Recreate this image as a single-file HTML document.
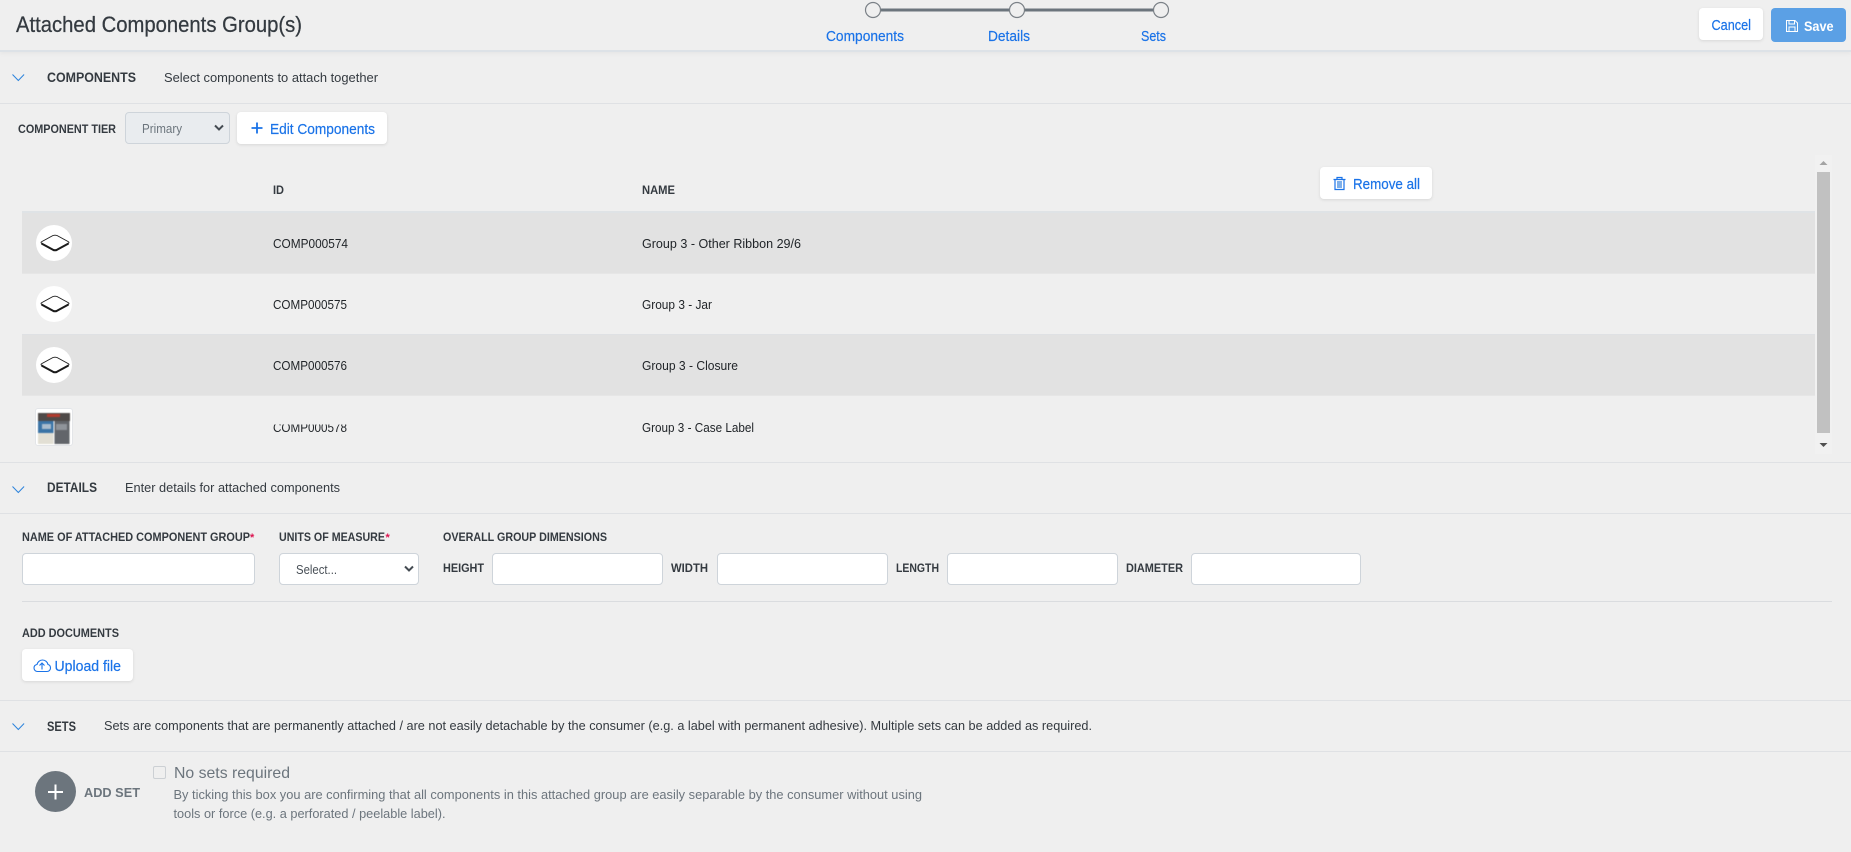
<!DOCTYPE html>
<html lang="en">
<head>
<meta charset="utf-8">
<title>Attached Components Group(s)</title>
<style>
html,body{margin:0;padding:0;width:1851px;height:852px;overflow:hidden;background:#efefef;font-family:"Liberation Sans",sans-serif}
.b{position:absolute;box-sizing:border-box}
.btn{background:#fff;border-radius:4px;box-shadow:0 1px 3px rgba(0,0,0,.1)}
.inp{background:#fff;border:1px solid #ced4da;border-radius:4px}
.ln{position:absolute;height:1px;left:0;width:1851px;background:#dfe1e4}
.row{position:absolute;box-sizing:border-box;left:22px;width:1793px;background:#e2e2e2}
svg.o{position:absolute;left:0;top:0}
text{font-family:"Liberation Sans",sans-serif}
.d{fill:#212529;font-size:13px}
.h{fill:#343a40;font-size:13.5px;font-weight:700}
.l{fill:#343a40;font-size:11.5px;font-weight:700}
.a{fill:#1a73e8;font-size:15px;stroke:#1a73e8;stroke-width:.2px}
.g{fill:#6c757d;font-size:13px}
</style>
</head>
<body>
<header class="b" style="left:0;top:0;width:1851px;height:52px;background:#efefef;border-bottom:2px solid #dde2e7;box-shadow:0 2px 4px rgba(0,0,0,.04)"></header>
<div class="b btn" style="left:1699px;top:8px;width:64px;height:32px"></div>
<div class="b" style="left:1771px;top:8px;width:75px;height:34px;background:#5ba0e5;border-radius:4px"></div>

<div class="ln" style="top:103px"></div>
<div class="b" style="left:124.5px;top:112px;width:105px;height:32px;background:#e9ecef;border:1px solid #ced4da;border-radius:4px"></div>
<div class="b btn" style="left:237px;top:112px;width:150px;height:32px"></div>

<div class="b" style="left:1815px;top:155px;width:17px;height:299px;background:#f1f1f1"></div>
<div class="b" style="left:1817px;top:172px;width:13px;height:261px;background:#c1c1c1"></div>
<div class="row" style="top:211px;height:63px;border-top:2px solid #dfe3e6;border-bottom:1px solid #e6e6e6"></div>
<div class="row" style="top:334px;height:62px;border-top:1px solid #dfe1e4;border-bottom:1px solid #e6e6e6"></div>
<div class="b btn" style="left:1320px;top:167px;width:112px;height:32px"></div>

<div class="b" style="left:36px;top:225px;width:36px;height:36px;border-radius:50%;background:#fff"></div>
<div class="b" style="left:36px;top:286px;width:36px;height:36px;border-radius:50%;background:#fff"></div>
<div class="b" style="left:36px;top:347px;width:36px;height:36px;border-radius:50%;background:#fff"></div>
<div class="b" style="left:35px;top:408px;width:38px;height:38px;border-radius:3px;background:#fff;border:1px solid #e3e5e8"></div>

<div class="ln" style="top:462px"></div>
<div class="ln" style="top:513px"></div>
<div class="b inp" style="left:22px;top:553px;width:233px;height:32px"></div>
<div class="b inp" style="left:279px;top:553px;width:140px;height:32px"></div>
<div class="b inp" style="left:492px;top:553px;width:171px;height:32px"></div>
<div class="b inp" style="left:717px;top:553px;width:171px;height:32px"></div>
<div class="b inp" style="left:947px;top:553px;width:171px;height:32px"></div>
<div class="b inp" style="left:1191px;top:553px;width:170px;height:32px"></div>
<div class="b" style="left:22px;top:601px;width:1810px;height:1px;background:#dadcdf"></div>
<div class="b btn" style="left:22px;top:649px;width:111px;height:32px"></div>
<div class="ln" style="top:700px"></div>
<div class="ln" style="top:751px"></div>
<div class="b" style="left:35px;top:771px;width:41px;height:41px;border-radius:50%;background:#6c757d"></div>
<div class="b" style="left:153px;top:766px;width:13px;height:13px;border-radius:2px;background:#efefef;border:1px solid #ccd0d4"></div>

<svg class="o" width="1851" height="852" viewBox="0 0 1851 852" xmlns="http://www.w3.org/2000/svg">
  <!-- stepper -->
  <line x1="873" y1="10" x2="1161" y2="10" stroke="#6c757d" stroke-width="3"/>
  <circle cx="873" cy="10" r="7.5" fill="#efefef" stroke="#7b8187" stroke-width="1.2"/>
  <circle cx="1017" cy="10" r="7.5" fill="#efefef" stroke="#7b8187" stroke-width="1.2"/>
  <circle cx="1161" cy="10" r="7.5" fill="#efefef" stroke="#7b8187" stroke-width="1.2"/>
  <text class="a" x="826" y="41" textLength="78" lengthAdjust="spacingAndGlyphs">Components</text>
  <text class="a" x="988" y="41" textLength="42" lengthAdjust="spacingAndGlyphs">Details</text>
  <text class="a" x="1141" y="41" textLength="25" lengthAdjust="spacingAndGlyphs">Sets</text>

  <!-- header -->
  <text x="16" y="32" font-size="22" fill="#343a40" stroke="#343a40" stroke-width=".25" textLength="286" lengthAdjust="spacingAndGlyphs">Attached Components Group(s)</text>
  <text class="a" x="1711.5" y="30" style="font-size:14.5px" textLength="39.5" lengthAdjust="spacingAndGlyphs">Cancel</text>
  <text x="1804" y="31" font-size="14" font-weight="700" fill="#fff" textLength="29.5" lengthAdjust="spacingAndGlyphs">Save</text>
  <path d="M1786.5 20.5h8.5l2.5 2.5v8.5h-11z M1789 20.5v3.5h5.5v-3.5 M1789 31.5v-4.5h6v4.5" fill="none" stroke="#fff" stroke-width="1"/>

  <!-- section chevrons -->
  <path d="M12.5 74.5l5.8 6 5.8-6" fill="none" stroke="#2c83dc" stroke-width="1"/>
  <path d="M12.5 486.5l5.8 6 5.8-6" fill="none" stroke="#2c83dc" stroke-width="1"/>
  <path d="M12.5 723.5l5.8 6 5.8-6" fill="none" stroke="#2c83dc" stroke-width="1"/>

  <!-- components -->
  <text class="h" x="47" y="82" textLength="89" lengthAdjust="spacingAndGlyphs">COMPONENTS</text>
  <text class="d" x="164" y="82" style="fill:#343a40" textLength="214" lengthAdjust="spacingAndGlyphs">Select components to attach together</text>
  <text class="l" x="18" y="133" textLength="98" lengthAdjust="spacingAndGlyphs">COMPONENT TIER</text>
  <text class="g" x="142" y="133" textLength="40" lengthAdjust="spacingAndGlyphs">Primary</text>
  <path d="M215 125.5l4 4 4-4" fill="none" stroke="#444b52" stroke-width="2"/>
  <path d="M257 122.5v11 M251.5 128h11" stroke="#1a73e8" stroke-width="1.8" fill="none"/>
  <text class="a" x="270" y="134" textLength="105" lengthAdjust="spacingAndGlyphs">Edit Components</text>

  <!-- table -->
  <text class="l" x="273" y="194" textLength="11" lengthAdjust="spacingAndGlyphs">ID</text>
  <text class="l" x="642" y="194" textLength="33" lengthAdjust="spacingAndGlyphs">NAME</text>
  <path d="M1333.5 179.5h12 M1337 179v-1.5h5v1.5 M1335 180v9.5h9v-9.5" fill="none" stroke="#1a73e8" stroke-width="1.2"/>
  <rect x="1337" y="181" width="5" height="7" fill="#7fb0ea"/>
  <text class="a" x="1353" y="189" style="font-size:14.5px" textLength="67" lengthAdjust="spacingAndGlyphs">Remove all</text>
  <path d="M1823.5 161l4 4h-8z" fill="#a3a3a3"/>
  <path d="M1819.5 443h8l-4 4z" fill="#505050"/>

  <text class="d" x="273" y="248" textLength="75" lengthAdjust="spacingAndGlyphs">COMP000574</text>
  <text class="d" x="642" y="248" textLength="159" lengthAdjust="spacingAndGlyphs">Group 3 - Other Ribbon 29/6</text>
  <text class="d" x="273" y="309" textLength="74" lengthAdjust="spacingAndGlyphs">COMP000575</text>
  <text class="d" x="642" y="309" textLength="70" lengthAdjust="spacingAndGlyphs">Group 3 - Jar</text>
  <text class="d" x="273" y="370" textLength="74" lengthAdjust="spacingAndGlyphs">COMP000576</text>
  <text class="d" x="642" y="370" textLength="96" lengthAdjust="spacingAndGlyphs">Group 3 - Closure</text>
  <text class="d" x="273" y="432" textLength="74" lengthAdjust="spacingAndGlyphs">COMP000578</text>
  <text class="d" x="642" y="432" textLength="112" lengthAdjust="spacingAndGlyphs">Group 3 - Case Label</text>
  <rect x="265" y="419" width="90" height="5.5" fill="#efefef"/>

  <!-- diamonds -->
  <g fill="none" stroke="#1b1b1b" stroke-linejoin="round">
    <path d="M42 241.5 L53 235.5 Q55 234.8 57 235.5 L68 241.5 Q70 242.5 68 243.5 L57 249.5 Q55 250.5 53 249.5 L42 243.5 Q40 242.5 42 241.5Z" stroke-width=".9"/>
    <path d="M41.5 243.5 L53 249.8 Q55 250.8 57 249.8 L68.5 243.5" stroke-width="2"/>
    <path d="M42 302.5 L53 296.5 Q55 295.8 57 296.5 L68 302.5 Q70 303.5 68 304.5 L57 310.5 Q55 311.5 53 310.5 L42 304.5 Q40 303.5 42 302.5Z" stroke-width=".9"/>
    <path d="M41.5 304.5 L53 310.8 Q55 311.8 57 310.8 L68.5 304.5" stroke-width="2"/>
    <path d="M42 363.5 L53 357.5 Q55 356.8 57 357.5 L68 363.5 Q70 364.5 68 365.5 L57 371.5 Q55 372.5 53 371.5 L42 365.5 Q40 364.5 42 363.5Z" stroke-width=".9"/>
    <path d="M41.5 365.5 L53 371.8 Q55 372.8 57 371.8 L68.5 365.5" stroke-width="2"/>
  </g>

  <!-- thumbnail -->
  <g style="filter:blur(.6px)">
    <rect x="38" y="413" width="32" height="8" fill="#4f4a48"/>
    <rect x="47" y="414" width="13" height="3" fill="#b23a2c"/>
    <rect x="38" y="421" width="15.5" height="12" fill="#3b74a6"/>
    <rect x="42" y="424" width="9" height="5" fill="#a9bccd"/>
    <rect x="38" y="433" width="15.5" height="11" fill="#e2dfd4"/>
    <rect x="54.5" y="421" width="15" height="23" fill="#62656a"/>
    <rect x="56" y="424" width="11" height="6" fill="#8f949a"/>
  </g>

  <!-- details -->
  <text class="h" x="47" y="492" textLength="50" lengthAdjust="spacingAndGlyphs">DETAILS</text>
  <text class="d" x="125" y="492" style="fill:#343a40" textLength="215" lengthAdjust="spacingAndGlyphs">Enter details for attached components</text>
  <text class="l" x="22" y="541" textLength="228" lengthAdjust="spacingAndGlyphs">NAME OF ATTACHED COMPONENT GROUP</text>
  <text x="250" y="541" font-size="11" font-weight="700" fill="#dc1450">*</text>
  <text class="l" x="279" y="541" textLength="106" lengthAdjust="spacingAndGlyphs">UNITS OF MEASURE</text>
  <text x="385.5" y="541" font-size="11" font-weight="700" fill="#dc1450">*</text>
  <text class="l" x="443" y="541" textLength="164" lengthAdjust="spacingAndGlyphs">OVERALL GROUP DIMENSIONS</text>
  <text class="l" x="443" y="572" textLength="41" lengthAdjust="spacingAndGlyphs">HEIGHT</text>
  <text class="l" x="671" y="572" textLength="37" lengthAdjust="spacingAndGlyphs">WIDTH</text>
  <text class="l" x="896" y="572" textLength="43" lengthAdjust="spacingAndGlyphs">LENGTH</text>
  <text class="l" x="1126" y="572" textLength="57" lengthAdjust="spacingAndGlyphs">DIAMETER</text>
  <text class="d" x="296" y="574" style="fill:#495057" textLength="41" lengthAdjust="spacingAndGlyphs">Select...</text>
  <path d="M405 566.5l4 4 4-4" fill="none" stroke="#444b52" stroke-width="2"/>
  <text class="l" x="22" y="637" textLength="97" lengthAdjust="spacingAndGlyphs">ADD DOCUMENTS</text>
  <path d="M38 671.5h-0.5c-2 0-3.5-1.5-3.5-3.5 0-1.8 1.2-3.2 3-3.5 .6-2.6 2.8-4.5 5.5-4.5 2.7 0 5 1.9 5.5 4.5 1.5.4 2.5 1.8 2.5 3.5 0 2-1.5 3.5-3.5 3.5z M42 669.5v-6 M39.5 665.5l2.5-2.5 2.5 2.5" fill="none" stroke="#1a73e8" stroke-width="1.1"/>
  <text class="a" x="54.5" y="671" textLength="66.5" lengthAdjust="spacingAndGlyphs">Upload file</text>

  <!-- sets -->
  <text class="h" x="47" y="731" textLength="29" lengthAdjust="spacingAndGlyphs">SETS</text>
  <text class="d" x="104" y="730" style="fill:#343a40" textLength="988" lengthAdjust="spacingAndGlyphs">Sets are components that are permanently attached / are not easily detachable by the consumer (e.g. a label with permanent adhesive). Multiple sets can be added as required.</text>
  <path d="M55.5 784.5v15 M48 792h15" stroke="#fff" stroke-width="2" fill="none"/>
  <text x="84" y="797" font-size="13" font-weight="700" fill="#6c757d" textLength="56" lengthAdjust="spacingAndGlyphs">ADD SET</text>
  <text x="174" y="778" font-size="16" fill="#6c757d" textLength="116" lengthAdjust="spacingAndGlyphs">No sets required</text>
  <text class="g" x="173.5" y="799" textLength="748.5" lengthAdjust="spacingAndGlyphs">By ticking this box you are confirming that all components in this attached group are easily separable by the consumer without using</text>
  <text class="g" x="173.5" y="818" textLength="272" lengthAdjust="spacingAndGlyphs">tools or force (e.g. a perforated / peelable label).</text>
</svg>
</body>
</html>
